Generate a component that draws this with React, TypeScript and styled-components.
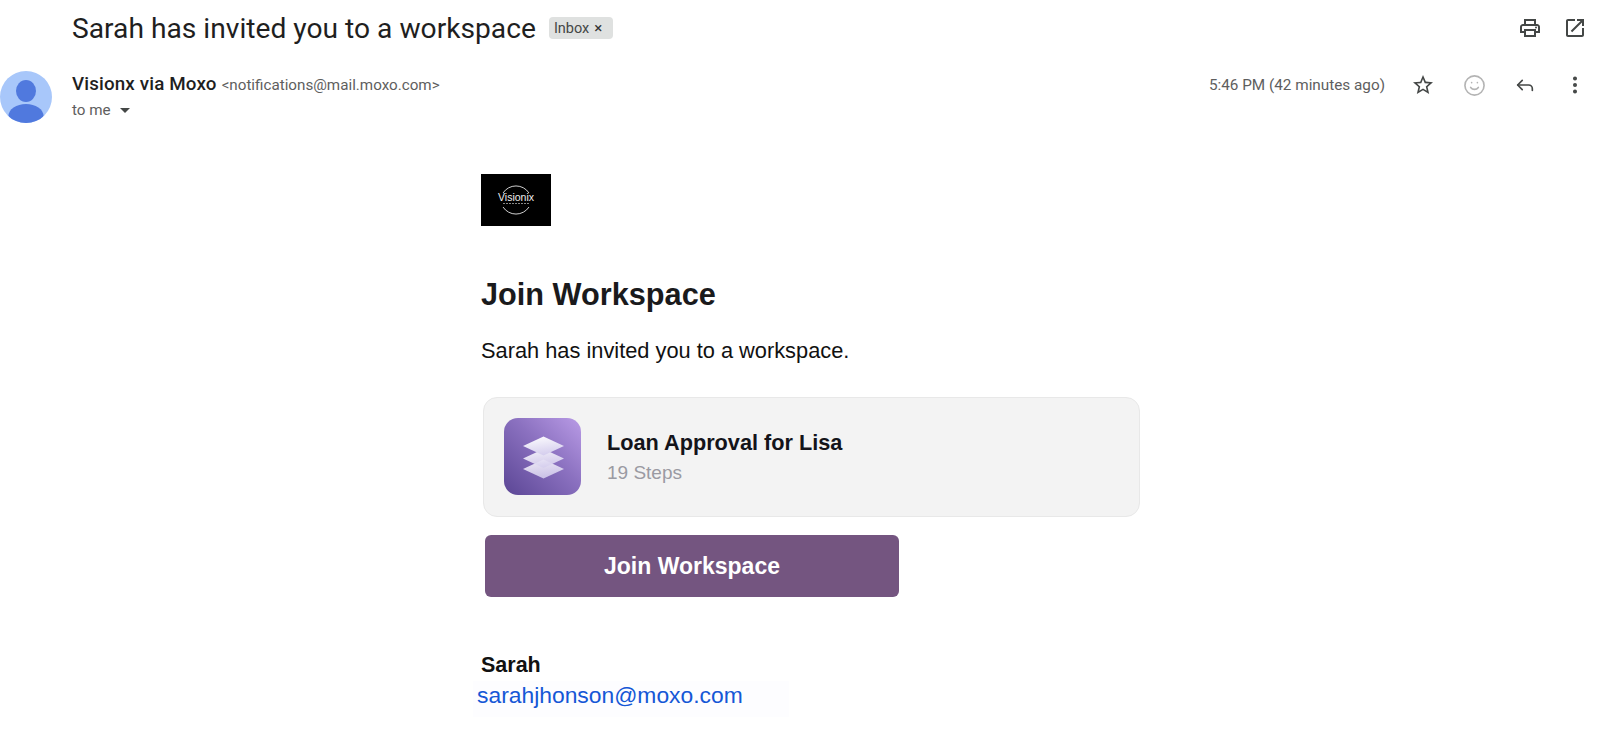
import React from 'react'
import styled, { createGlobalStyle } from 'styled-components'
import { Smile, Reply, MoreVertical } from 'lucide-react'

const GlobalStyle = createGlobalStyle`
  html, body {
    margin: 0;
    padding: 0;
    background: #fff;
    overflow: hidden;
  }
  body {
    font-family: Roboto, "Liberation Sans", sans-serif;
  }
`

const App = () => (
  <>
    <GlobalStyle />
    <Page>
      <SubjectRow>
        <SubjectTitle>Sarah has invited you to a workspace</SubjectTitle>
        <InboxChip>
          Inbox <ChipClose>×</ChipClose>
        </InboxChip>
        <SubjectActions>
          <ActionIcon viewBox="0 0 24 24">
            <path d="M19 8h-1V3H6v5H5c-1.66 0-3 1.34-3 3v6h4v4h12v-4h4v-6c0-1.66-1.34-3-3-3zM8 5h8v3H8V5zm8 12v2H8v-4h8v2zm2-2v-2H6v2H4v-4c0-.55.45-1 1-1h14c.55 0 1 .45 1 1v4h-2z" />
            <circle cx="18" cy="11.5" r="1" />
          </ActionIcon>
          <ActionIcon viewBox="0 0 24 24">
            <path d="M19 19H5V5h7V3H5c-1.11 0-2 .9-2 2v14c0 1.1.89 2 2 2h14c1.1 0 2-.9 2-2v-7h-2v7zM14 3v2h3.59l-9.83 9.83 1.41 1.41L19 6.41V10h2V3h-7z" />
          </ActionIcon>
        </SubjectActions>
      </SubjectRow>

      <SenderRow>
        <Avatar viewBox="0 0 52 52">
          <defs>
            <clipPath id="avatar-clip">
              <circle cx="26" cy="26" r="26" />
            </clipPath>
          </defs>
          <g clipPath="url(#avatar-clip)">
            <rect width="52" height="52" fill="#a8c7fa" />
            <ellipse cx="26" cy="20" rx="10" ry="11" fill="#5079de" />
            <ellipse cx="26" cy="45" rx="17.5" ry="12" fill="#5079de" />
          </g>
        </Avatar>
        <SenderInfo>
          <SenderLine>
            <SenderName>Visionx via Moxo</SenderName>
            <SenderEmail>&lt;notifications@mail.moxo.com&gt;</SenderEmail>
          </SenderLine>
          <ToMe>
            to me <Caret />
          </ToMe>
        </SenderInfo>
        <MessageMeta>
          <TimeText>5:46 PM (42 minutes ago)</TimeText>
          <MetaIcons>
            <ActionIcon viewBox="0 0 24 24">
              <path d="M22 9.24l-7.19-.62L12 2 9.19 8.63 2 9.24l5.46 4.73L5.82 21 12 17.27 18.18 21l-1.63-7.03L22 9.24zM12 15.4l-3.76 2.27 1-4.28-3.32-2.88 4.38-.38L12 6.1l1.71 4.04 4.38.38-3.32 2.88 1 4.28L12 15.4z" />
            </ActionIcon>
            <Smile size={23} strokeWidth={1.7} color="#b4b4b4" />
            <Reply size={22} strokeWidth={1.8} color="#444746" />
            <MoreVertical size={22} strokeWidth={2.4} color="#444746" />
          </MetaIcons>
        </MessageMeta>
      </SenderRow>

      <MailBody>
        <LogoBox>
          <LogoMark viewBox="0 0 34 36">
            <path d="M4 11 A15.5 15.5 0 0 1 30 11" fill="none" stroke="#e6e6e6" strokeWidth="0.9" />
            <path d="M4 25 A15.5 15.5 0 0 0 30 25" fill="none" stroke="#e6e6e6" strokeWidth="0.9" />
            <line x1="4" y1="21.5" x2="30" y2="21.5" stroke="#888" strokeWidth="1" strokeDasharray="2 1" />
          </LogoMark>
          <LogoText>Visionix</LogoText>
        </LogoBox>
        <Heading>Join Workspace</Heading>
        <Intro>Sarah has invited you to a workspace.</Intro>
        <WorkspaceCard>
          <WorkspaceIcon>
            <svg width="44" height="44" viewBox="0 0 44 44">
              <defs>
                <linearGradient id="sheet" x1="0" y1="0" x2="0.3" y2="1">
                  <stop offset="0" stopColor="#ffffff" />
                  <stop offset="1" stopColor="#d6cfee" />
                </linearGradient>
              </defs>
              <path d="M22.5 24.5 L43 34 L22.5 43.5 L2 34 Z" fill="url(#sheet)" opacity="0.88" />
              <path d="M22.5 14 L43 23.5 L22.5 33 L2 23.5 Z" fill="url(#sheet)" opacity="0.92" />
              <path d="M22.5 1.5 L43 11 L22.5 20.5 L2 11 Z" fill="url(#sheet)" />
            </svg>
          </WorkspaceIcon>
          <WorkspaceText>
            <WorkspaceName>Loan Approval for Lisa</WorkspaceName>
            <WorkspaceSteps>19 Steps</WorkspaceSteps>
          </WorkspaceText>
        </WorkspaceCard>
        <JoinButton>Join Workspace</JoinButton>
        <SignName>Sarah</SignName>
        <SignEmail>sarahjhonson@moxo.com</SignEmail>
      </MailBody>
    </Page>
  </>
)

const Page = styled.div`
  width: 1600px;
  height: 731px;
  overflow: hidden;
  background: #fff;
`

const SubjectRow = styled.div`
  height: 56px;
  padding: 0 13px 0 72px;
  display: flex;
  align-items: center;
`

const SubjectTitle = styled.h1`
  margin: 0;
  font-size: 28.2px;
  font-weight: 400;
  color: #1f1f1f;
  white-space: nowrap;
`

const InboxChip = styled.span`
  margin-left: 13px;
  height: 22px;
  width: 64px;
  box-sizing: border-box;
  padding-left: 5px;
  display: flex;
  align-items: center;
  gap: 5px;
  border-radius: 4px;
  background: #dfe1e0;
  color: #444746;
  font-size: 14.5px;
`

const ChipClose = styled.span`
  font-size: 15px;
  color: #333;
`

const SubjectActions = styled.div`
  margin-left: auto;
  display: flex;
  align-items: center;
  gap: 21px;
`

const ActionIcon = styled.svg`
  width: 24px;
  height: 24px;
  fill: #444746;
  flex: none;
`

const SenderRow = styled.div`
  height: 66px;
  padding-right: 14px;
  display: flex;
  align-items: flex-start;
`

const Avatar = styled.svg`
  width: 52px;
  height: 52px;
  margin-top: 15px;
  flex: none;
`

const SenderInfo = styled.div`
  margin-left: 20px;
  padding-top: 17px;
`

const SenderLine = styled.div`
  display: flex;
  align-items: baseline;
  gap: 5px;
  white-space: nowrap;
`

const SenderName = styled.span`
  font-size: 18.8px;
  letter-spacing: 0.15px;
  font-weight: 500;
  color: #1f1f1f;
`

const SenderEmail = styled.span`
  font-size: 15.2px;
  color: #5e5e5e;
`

const ToMe = styled.div`
  margin-top: 6px;
  display: flex;
  align-items: center;
  gap: 9px;
  font-size: 15.2px;
  color: #5e5e5e;
`

const Caret = styled.span`
  width: 0;
  height: 0;
  border-left: 5px solid transparent;
  border-right: 5px solid transparent;
  border-top: 5px solid #444746;
`

const MessageMeta = styled.div`
  margin-left: auto;
  padding-top: 17px;
  display: flex;
  align-items: center;
`

const TimeText = styled.span`
  font-size: 15.3px;
  color: #5e5e5e;
  white-space: nowrap;
`

const MetaIcons = styled.div`
  margin-left: 26px;
  display: flex;
  align-items: center;
  gap: 28px;
`

const MailBody = styled.div`
  width: 660px;
  margin-left: 481px;
  padding-top: 52px;
  font-family: "Liberation Sans", Arial, sans-serif;
  display: flex;
  flex-direction: column;
  align-items: flex-start;
`

const LogoBox = styled.div`
  position: relative;
  width: 70px;
  height: 52px;
  background: #000;
  display: flex;
  align-items: center;
  justify-content: center;
`

const LogoMark = styled.svg`
  position: absolute;
  left: 18px;
  top: 8px;
  width: 34px;
  height: 36px;
`

const LogoText = styled.span`
  position: relative;
  color: #eee;
  font-size: 10.5px;
  margin-top: -6px;
`

const Heading = styled.h2`
  margin: 51px 0 0;
  font-size: 30.7px;
  line-height: 36px;
  font-weight: 700;
  color: #1a1a1c;
`

const Intro = styled.p`
  margin: 25px 0 0;
  font-size: 21.8px;
  line-height: 26px;
  color: #111;
`

const WorkspaceCard = styled.div`
  margin: 33px 0 0 2px;
  width: 657px;
  height: 120px;
  box-sizing: border-box;
  padding: 20px 20px 21px;
  display: flex;
  align-items: center;
  gap: 26px;
  background: #f3f3f3;
  border: 1px solid #e8e8e8;
  border-radius: 14px;
`

const WorkspaceIcon = styled.div`
  width: 77px;
  height: 77px;
  flex: none;
  display: flex;
  align-items: center;
  justify-content: center;
  border-radius: 14px;
  background: linear-gradient(45deg, #5b4695 0%, #8a70bf 55%, #b99be6 100%);
`

const WorkspaceText = styled.div`
  margin-top: 1px;
  display: flex;
  flex-direction: column;
  gap: 6px;
`

const WorkspaceName = styled.div`
  font-size: 21.7px;
  line-height: 26px;
  font-weight: 700;
  color: #14141a;
`

const WorkspaceSteps = styled.div`
  font-size: 19px;
  line-height: 22px;
  color: #9a9aa2;
`

const JoinButton = styled.button`
  margin: 18px 0 0 4px;
  width: 414px;
  height: 62px;
  border: 0;
  border-radius: 6px;
  background: #745580;
  color: #fff;
  font-family: inherit;
  font-size: 23px;
  font-weight: 700;
`

const SignName = styled.div`
  margin-top: 55px;
  font-size: 21.5px;
  line-height: 26px;
  font-weight: 700;
  color: #111;
`

const SignEmail = styled.div`
  margin: 3px 0 0 -8px;
  width: 316px;
  height: 36px;
  box-sizing: border-box;
  padding-left: 4px;
  line-height: 28px;
  font-size: 22.85px;
  color: #1557d6;
  background: #fdfdff;
`

export default App
